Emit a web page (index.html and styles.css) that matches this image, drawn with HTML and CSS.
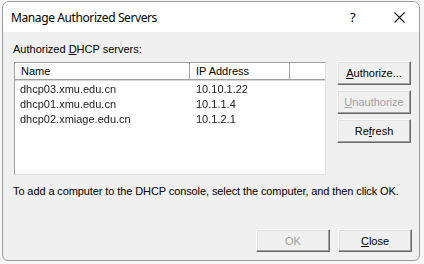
FILE: index.html
```html
<!DOCTYPE html>
<html>
<head>
<meta charset="utf-8">
<link rel="stylesheet" href="styles.css">
</head>
<body>
<div class="dialog">
  <div class="titlebar">
    <span class="title">Manage Authorized Servers</span>
    <span class="help">?</span>
    <span class="close-x"><svg width="11" height="11" viewBox="0 0 11 11"><path d="M0.5 0.5 L10.5 10.5 M10.5 0.5 L0.5 10.5" stroke="#1a1a1a" stroke-width="1.1" fill="none"/></svg></span>
  </div>
  <div class="content">
    <div class="label">Authorized <u>D</u>HCP servers:</div>
    <div class="main">
      <div class="listbox">
        <div class="lv-header">
          <div class="hcell name">Name</div>
          <div class="hcell ip">IP Address</div>
          <div class="hcell rest"></div>
        </div>
        <div class="lv-row"><span class="c-name blur">dhcp03.xmu.edu.cn</span><span class="c-ip blur">10.10.1.22</span></div>
        <div class="lv-row"><span class="c-name blur">dhcp01.xmu.edu.cn</span><span class="c-ip blur">10.1.1.4</span></div>
        <div class="lv-row"><span class="c-name blur">dhcp02.xmiage.edu.cn</span><span class="c-ip blur">10.1.2.1</span></div>
      </div>
      <div class="side-buttons">
        <button class="btn"><u>A</u>uthorize...</button>
        <button class="btn disabled"><u>U</u>nauthorize</button>
        <button class="btn">Re<u>f</u>resh</button>
      </div>
    </div>
    <div class="note">To add a computer to the DHCP console, select the computer, and then click OK.</div>
    <div class="footer">
      <button class="btn disabled">OK</button>
      <button class="btn"><u>C</u>lose</button>
    </div>
  </div>
</div>
</body>
</html>
```
FILE: styles.css
```css
html, body {
  margin: 0;
  padding: 0;
}
body {
  width: 424px;
  height: 264px;
  background: #f7f7f7;
  overflow: hidden;
  font-family: "Liberation Sans", Arial, sans-serif;
}
.dialog {
  margin: 1px 0 0 2px;
  width: 418px;
  height: 260px;
  box-sizing: border-box;
  border: 1px solid #9a9a9a;
  border-radius: 7px 7px 6px 6px;
  background: #f0f0f0;
  display: flex;
  flex-direction: column;
  overflow: hidden;
}
.titlebar {
  height: 30px;
  flex: none;
  background: #ffffff;
  display: flex;
  align-items: center;
  font-family: "Noto Sans", "Open Sans", sans-serif;
  font-size: 12px;
  letter-spacing: -0.4px;
  color: #000;
}
.title {
  margin-left: 8px;
  flex: 1;
}
.help {
  width: 10px;
  margin-right: 34px;
  font-size: 13px;
}
.close-x {
  width: 11px;
  height: 11px;
  margin-right: 14px;
  display: flex;
}
.content {
  flex: 1;
  display: flex;
  flex-direction: column;
  padding: 11px 7px 8px 11px;
  font-size: 11px;
  color: #000;
}
.label {
  line-height: 13px;
  height: 13px;
  margin-left: -1px;
  margin-bottom: 6px;
}
.main {
  display: flex;
  gap: 11px;
}
.listbox {
  width: 312px;
  height: 113px;
  box-sizing: border-box;
  background: #fff;
  border: 1px solid;
  border-color: #a0a0a0 #e3e3e3 #e3e3e3 #a0a0a0;
}
.lv-header {
  display: flex;
  height: 17px;
  border-bottom: 1px solid #d5d5d5;
}
.hcell {
  box-sizing: border-box;
  height: 17px;
  line-height: 16px;
  padding-left: 6px;
  border-right: 1px solid #a0a0a0;
  border-bottom: 1px solid #a0a0a0;
}
.hcell.name { width: 175px; }
.hcell.ip { width: 100px; }
.hcell.rest { flex: 1; border-right: none; }
.lv-row {
  display: flex;
  height: 15px;
  line-height: 15px;
}
.lv-header + .lv-row { margin-top: 1px; }
.c-name { width: 175px; padding-left: 5px; box-sizing: border-box; }
.c-ip { padding-left: 6px; }
.blur {
  color: #222;
  filter: blur(0.5px);
}
.side-buttons {
  display: flex;
  flex-direction: column;
  gap: 5px;
  margin-top: -1px;
}
.btn {
  width: 74px;
  height: 24px;
  box-sizing: border-box;
  padding: 0;
  font-family: "Liberation Sans", Arial, sans-serif;
  font-size: 11px;
  color: #000;
  background: #f0f0f0;
  border: 1px solid;
  border-color: #ffffff #696969 #696969 #ffffff;
  box-shadow: inset -1px -1px 0 #a0a0a0, inset 1px 1px 0 #e3e3e3;
}
.btn.disabled {
  color: #a0a0a0;
}
.note {
  margin-top: 10px;
  margin-left: -1px;
  line-height: 13px;
  height: 13px;
  white-space: nowrap;
  letter-spacing: -0.1px;
}
.footer {
  margin-top: auto;
  display: flex;
  justify-content: flex-end;
  gap: 8px;
}
.footer .btn {
  height: 23px;
}
```
